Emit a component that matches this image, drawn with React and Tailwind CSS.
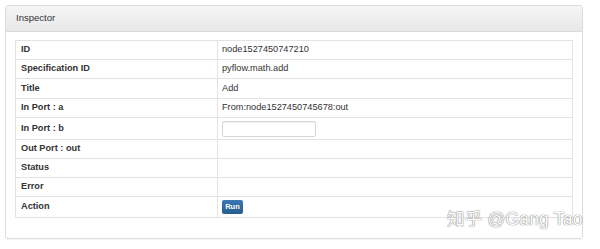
import React from 'react'

const rows = [
  { label: 'ID', value: 'node1527450747210', h: 'h-[19px]' },
  { label: 'Specification ID', value: 'pyflow.math.add', h: 'h-[19px]' },
  { label: 'Title', value: 'Add', h: 'h-[20px]' },
  { label: 'In Port : a', value: 'From:node1527450745678:out', h: 'h-[19px]' },
  { label: 'In Port : b', input: true, h: 'h-[22px]' },
  { label: 'Out Port : out', value: '', h: 'h-[19px]' },
  { label: 'Status', value: '', h: 'h-[19px]' },
  { label: 'Error', value: '', h: 'h-[19px]' },
  { label: 'Action', button: true, h: 'h-[21px]' },
]

const App = () => {
  return (
    <div className='relative w-[600px] h-[249px] bg-white pt-[5px] pl-[5px] text-[#333] font-["Liberation_Sans",Arial,sans-serif]'>
      {/* panel */}
      <div className='w-[578px] h-[234px] border border-[#dcdcdc] rounded-[3px] shadow-[0_1px_1px_rgba(0,0,0,0.05)] flex flex-col'>
        <div className='h-[26px] flex items-center px-[10px] bg-gradient-to-b from-[#f5f5f5] to-[#e8e8e8] border-b border-[#dcdcdc] rounded-t-[3px] text-[9.5px]'>
          Inspector
        </div>
        <div className='pt-[8px] px-[9px]'>
          <table className='w-[558px] border-collapse border border-[#e3e3e3] text-[9.2px] leading-none'>
            <tbody>
              {rows.map((row, i) => (
                <tr key={i} className={`${row.h} border-t border-[#e3e3e3]`}>
                  <td className='w-[202px] pl-[5px] font-bold border-r border-[#e3e3e3] align-middle'>{row.label}</td>
                  <td className='pl-[4px] align-middle'>
                    {row.input && (
                      <input type='text' className='block w-[94px] h-[16px] border border-[#d6d6d6] rounded-[2px] shadow-[inset_0_1px_1px_rgba(0,0,0,0.06)] focus:outline-0' />
                    )}
                    {row.button && (
                      <button className='block w-[21px] h-[14px] rounded-[2px] bg-gradient-to-b from-[#3a78b4] to-[#275d8e] text-white text-[7.5px] font-bold leading-none'>
                        Run
                      </button>
                    )}
                    {row.value}
                  </td>
                </tr>
              ))}
            </tbody>
          </table>
        </div>
      </div>

      {/* watermark */}
      <div className='absolute left-[447px] top-[211px] text-[17.5px] leading-none text-white [text-shadow:0_0_1px_#777,0_0_1px_#777] font-["Liberation_Sans","Noto_Sans_CJK_SC",sans-serif] tracking-[0.2px] whitespace-nowrap'>
        知乎 @Gang Tao
      </div>
    </div>
  )
}

export default App
